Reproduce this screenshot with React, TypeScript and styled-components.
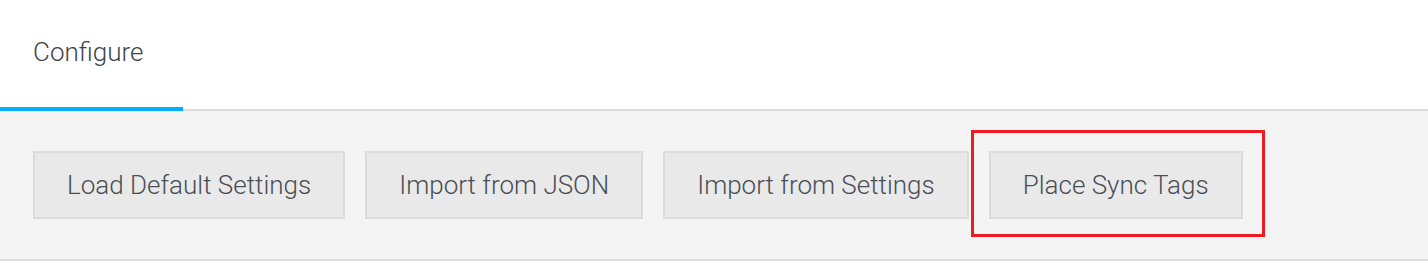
import React from 'react';
import styled, { createGlobalStyle } from 'styled-components';

const GlobalStyle = createGlobalStyle`
	html, body {
		margin: 0;
		padding: 0;
		background: #fff;
		font-family: Roboto, 'Liberation Sans', sans-serif;
	}
`;

const Page = styled.div`
	width: 100%;
	height: 268px;
	background: #fff;
`;

const TabBar = styled.nav`
	display: flex;
	align-items: flex-end;
	height: 111px;
	box-sizing: border-box;
	border-bottom: 2px solid #dcdcdc;
`;

const Tab = styled.div<{ active?: boolean }>`
	display: flex;
	align-items: center;
	box-sizing: border-box;
	height: 111px;
	margin-bottom: -2px;
	padding: 0 40px 4px 33px;
	font-size: 26px;
	font-weight: 300;
	color: #3f444a;
	border-bottom: 4px solid ${(props) => (props.active ? '#00b0ff' : 'transparent')};
	cursor: pointer;
`;

const Toolbar = styled.div`
	display: flex;
	gap: 20px;
	padding: 40px 33px;
	background: #f4f4f4;
	border-bottom: 2px solid #dcdcdc;
`;

const Button = styled.button`
	height: 68px;
	padding: 0 32px;
	background: #e9e9e9;
	border: 2px solid #dcdcdc;
	border-radius: 0;
	font-family: Roboto, 'Liberation Sans', sans-serif;
	font-size: 26px;
	font-weight: 300;
	color: #4a4f55;
	cursor: pointer;
`;

const Highlight = styled.span`
	position: relative;
	display: inline-flex;

	&::after {
		content: '';
		position: absolute;
		top: -21px;
		left: -18px;
		right: -22px;
		bottom: -18px;
		border: 3px solid #ed1c24;
		pointer-events: none;
	}
`;

export default function App() {
	return (
		<Page>
			<GlobalStyle />
			<TabBar>
				<Tab active>Configure</Tab>
			</TabBar>
			<Toolbar>
				<Button>Load Default Settings</Button>
				<Button>Import from JSON</Button>
				<Button>Import from Settings</Button>
				<Highlight>
					<Button>Place Sync Tags</Button>
				</Highlight>
			</Toolbar>
		</Page>
	);
}
